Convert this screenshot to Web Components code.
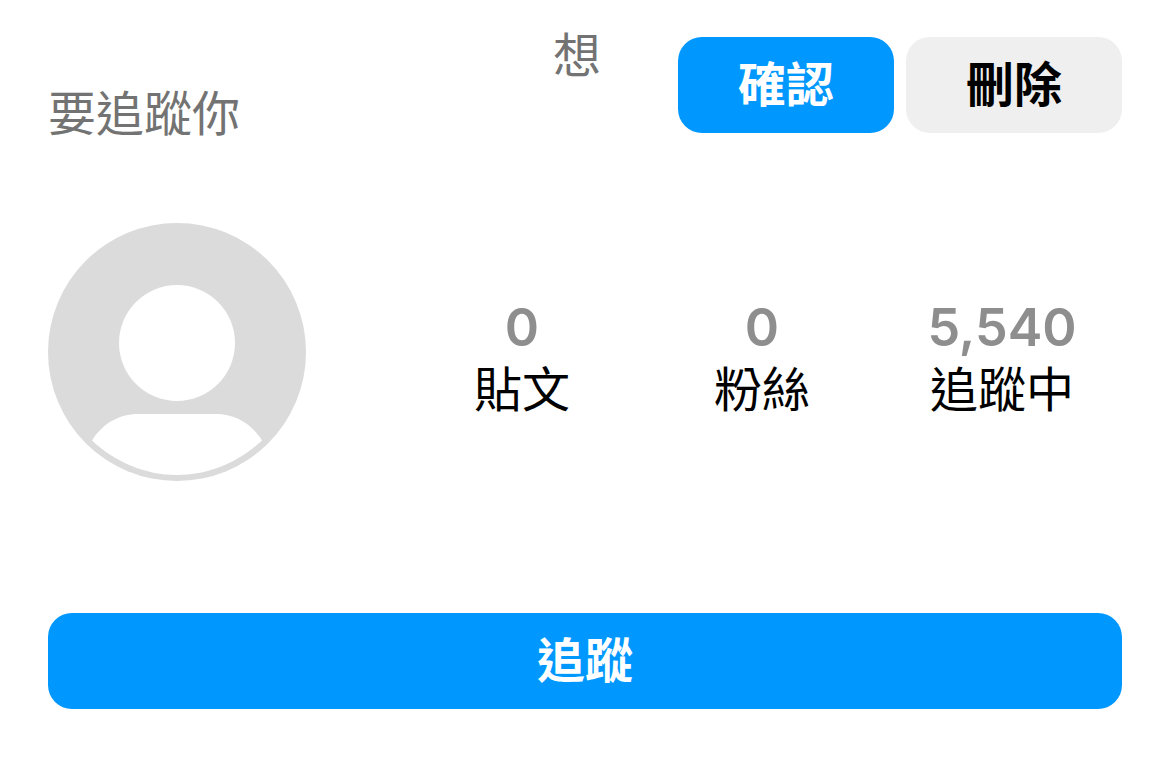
<!DOCTYPE html>
<html lang="zh-Hant">
<head>
<meta charset="utf-8">
<meta name="viewport" content="width=device-width, initial-scale=1">
<title>追蹤要求</title>
<style>
  body {
    margin: 0;
    background: #fff;
    color: #000;
    font-family: Inter, "Noto Sans CJK TC", sans-serif;
    font-size: 48px;
  }
</style>
</head>
<body>
<profile-page></profile-page>
<script>
class BaseElement extends HTMLElement {
  constructor() {
    super();
    this.attachShadow({ mode: "open" }).innerHTML = this.constructor.markup;
  }
}

class ActionButton extends BaseElement {
  static markup = `
    <style>
      :host { display: block; }
      button {
        display: block; width: 100%; height: 96px; margin: 0; padding: 0;
        border: 0; border-radius: 24px; background: #0098ff; color: #fff;
        font: inherit; font-weight: 700; line-height: 64px; cursor: pointer;
      }
      :host([variant="secondary"]) button { background: #efefef; color: #000; }
    </style>
    <button type="button"><slot></slot></button>`;
}
customElements.define("action-button", ActionButton);

class FollowRequest extends BaseElement {
  static markup = `
    <style>
      :host { display: flex; align-items: center; gap: 32px; }
      p { flex: 1; min-width: 0; margin: 0; line-height: 58px; color: #737373; }
      .name { display: inline-block; width: 505px; max-width: 85%; }
      .actions { display: grid; grid-template-columns: 216px 216px; gap: 12px; }
    </style>
    <p><span class="name"></span>想要追蹤你</p>
    <div class="actions">
      <action-button>確認</action-button>
      <action-button variant="secondary">刪除</action-button>
    </div>`;
}
customElements.define("follow-request", FollowRequest);

class UserAvatar extends BaseElement {
  static markup = `
    <style>
      :host { display: block; width: 258px; }
      svg { display: block; width: 100%; }
    </style>
    <svg viewBox="0 0 258 258" aria-hidden="true">
      <circle cx="129" cy="129" r="129" fill="#dbdbdb"/>
      <circle cx="129" cy="120" r="58" fill="#fff"/>
      <path d="M44 217.500C54 201 71 191 90 191H168C187 191 204 201 214 217.500C191 239 161 252 129 252C97 252 67 239 44 217.500Z" fill="#fff"/>
    </svg>`;
}
customElements.define("user-avatar", UserAvatar);

class ProfileStat extends BaseElement {
  static markup = `
    <style>
      :host { display: flex; flex-direction: column; text-align: center; line-height: 62px; }
      .count { color: #8e8e8e; font-size: 52px; font-weight: 600; }
    </style>
    <slot name="count" class="count"></slot>
    <span><slot></slot></span>`;
}
customElements.define("profile-stat", ProfileStat);

class ProfileSummary extends BaseElement {
  static markup = `
    <style>
      :host { display: flex; align-items: center; gap: 96px; }
      user-avatar { flex: none; }
      .stats { flex: 1; display: grid; grid-template-columns: repeat(3, 1fr); padding-top: 14px; }
    </style>
    <user-avatar></user-avatar>
    <div class="stats">
      <profile-stat><span slot="count">0</span>貼文</profile-stat>
      <profile-stat><span slot="count">0</span>粉絲</profile-stat>
      <profile-stat><span slot="count">5,540</span>追蹤中</profile-stat>
    </div>`;
}
customElements.define("profile-summary", ProfileSummary);

class ProfilePage extends BaseElement {
  static markup = `
    <style>
      :host { display: block; }
      main { padding: 27px 48px 64px; }
      profile-summary { margin-top: 80px; }
      .follow { margin-top: 132px; }
    </style>
    <main>
      <follow-request></follow-request>
      <profile-summary></profile-summary>
      <action-button class="follow">追蹤</action-button>
    </main>`;
}
customElements.define("profile-page", ProfilePage);
</script>
</body>
</html>
